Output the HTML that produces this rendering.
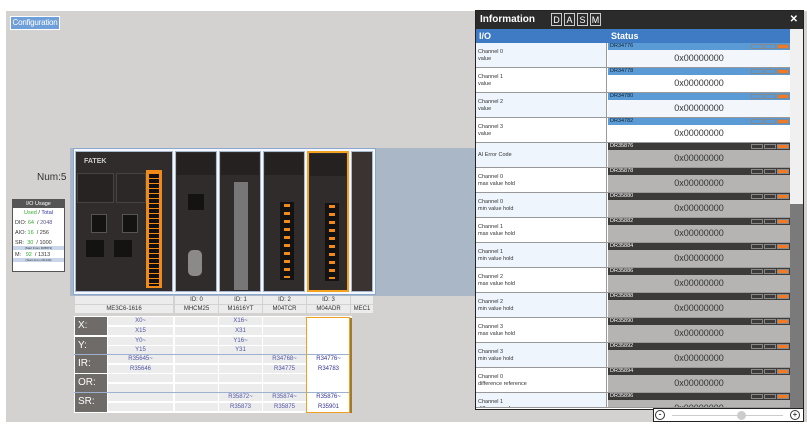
<!DOCTYPE html>
<html><head><meta charset="utf-8"><style>
*{box-sizing:border-box;margin:0;padding:0}
body{width:807px;height:437px;background:#fff;position:relative;overflow:hidden;font-family:"Liberation Sans",sans-serif}
.abs{position:absolute}
.gray{left:6px;top:11px;width:801px;height:411px;background:#d3d2d0}
.cfg{left:10px;top:16px;width:50px;height:14px;background:#6f9fd8;border:1px solid #fff;color:#fff;font-size:8px;line-height:12px;text-align:center;letter-spacing:-0.2px}
.band{left:70px;top:148px;width:410px;height:148px;background:#a9b7c7}
.frame{left:73px;top:148px;width:303px;height:147px;background:#f4f7fb;border:1px solid #8aa7d0}
.mod{position:absolute;top:2px;height:141px;background:#2f2c2b;border:1px solid #a7b8d0}
.mhead{position:absolute;left:1px;right:1px;top:1px;height:22px;background:#242120}
.term{position:absolute;background:#151312}
.tbl div{position:absolute;background:#ececec;font-size:6px;color:#5257a5;text-align:center;line-height:9px}
.lbl{background:#6e6b69!important;color:#fff!important;font-size:10px!important;text-align:left!important;padding-left:3px}
.panel{left:475px;top:10px;width:329px;height:400px;background:#fff;border:1px solid #222}
.ph{left:0;top:0;width:327px;height:18px;background:#2b2b2b;color:#fff;font-weight:bold;font-size:10px;line-height:18px;padding-left:4px}
.dasm{position:absolute;top:2px;width:11px;height:13px;border:1px solid #ccc;font-weight:normal;font-size:9px;line-height:12px;text-align:center}
.ch{left:0;top:18px;width:314px;height:14px;background:#3e7bc4;color:#fff;font-weight:bold;font-size:9px;line-height:14px}
.row{position:absolute;left:0;width:314px;height:25px;border-bottom:1px solid #999}
.rl{position:absolute;left:0;top:0;width:131px;height:24px;font-size:5.5px;color:#333;padding:6px 0 0 2px;line-height:7px;border-right:1px solid #999}
.bar{position:absolute;left:132px;top:0;width:182px;height:7px;font-size:5.5px;line-height:7px;padding-left:2px;color:#fff}
.val{position:absolute;left:132px;top:7px;width:182px;height:17px;font-size:9px;line-height:17px;text-align:center;color:#333}
.b{position:absolute;top:1px;height:5px;width:12px;border:1px solid #888;font-size:3px;line-height:3px}
</style></head><body>
<div class="abs gray"></div>
<div class="abs cfg">Configuration</div>
<div class="abs band"></div>
<div class="abs" style="left:37px;top:172px;font-size:10px;color:#333">Num:5</div>
<div class="abs" style="left:12px;top:199px;width:53px;height:73px;background:#fff;border:1px solid #555;font-size:5.5px;color:#333">
 <div style="background:#555;color:#fff;text-align:center;height:8px;line-height:8px">I/O Usage</div>
 <div style="text-align:center;margin-top:2px"><span style="color:#3a3">Used</span> / <span style="color:#33a">Total</span></div>
 <div style="margin:4px 0 0 2px">DIO: <span style="color:#3a3">64</span> &nbsp;/ <span style="color:#558">2048</span></div>
 <div style="margin:4px 0 0 2px">AIO: <span style="color:#3a3">16</span> &nbsp;/ 256</div>
 <div style="margin:4px 0 0 2px">SR: &nbsp;<span style="color:#3a3">30</span> &nbsp;/ 1000</div>
 <div style="background:#c9d6ea;font-size:3px;text-align:center;height:4px">(Start From R35872)</div>
 <div style="margin:2px 0 0 2px">M: &nbsp;&nbsp;<span style="color:#3a3">92</span> &nbsp;/ 1313</div>
 <div style="background:#c9d6ea;font-size:3px;text-align:center;height:4px">(Start From M1139)</div>
</div>
<div class="abs frame">
 <div class="mod" style="left:1px;width:98px">
  <div style="position:absolute;left:8px;top:6px;color:#ccc;font-weight:bold;font-size:7px">FATEK</div>
  <div style="position:absolute;left:1px;top:21px;width:37px;height:30px;background:#262322;border:1px solid #444"></div>
  <div style="position:absolute;left:40px;top:21px;width:30px;height:30px;background:#2b2827;border:1px solid #444"></div>
  <div class="term" style="left:15px;top:62px;width:16px;height:19px;border:1px solid #555"></div>
  <div class="term" style="left:46px;top:62px;width:16px;height:19px;border:1px solid #555"></div>
  <div class="term" style="left:10px;top:88px;width:18px;height:17px"></div>
  <div class="term" style="left:38px;top:88px;width:18px;height:17px"></div>
  <div style="position:absolute;left:70px;top:18px;width:16px;height:118px;background:#f08a1a"></div>
  <div style="position:absolute;left:73px;top:22px;width:10px;height:112px;background:repeating-linear-gradient(#111 0 4px,#f08a1a 4px 5px)"></div>
 </div>
 <div class="mod" style="left:101px;width:42px"><div class="mhead"></div>
  <div class="term" style="left:12px;top:42px;width:16px;height:16px"></div>
  <div style="position:absolute;left:12px;top:98px;width:14px;height:26px;background:#8c8a88;border-radius:5px"></div>
 </div>
 <div class="mod" style="left:145px;width:42px"><div class="mhead"></div>
  <div style="position:absolute;left:14px;top:30px;width:14px;height:108px;background:#777"></div>
 </div>
 <div class="mod" style="left:189px;width:42px"><div class="mhead"></div>
  <div class="term" style="left:16px;top:50px;width:14px;height:78px"></div>
  <div style="position:absolute;left:20px;top:52px;width:6px;height:74px;background:repeating-linear-gradient(#f08a1a 0 3px,#111 3px 8px)"></div>
 </div>
 <div class="mod" style="left:233px;width:42px;border:2px solid #f2a21e"><div class="mhead"></div>
  <div class="term" style="left:16px;top:50px;width:14px;height:78px"></div>
  <div style="position:absolute;left:20px;top:52px;width:6px;height:74px;background:repeating-linear-gradient(#f08a1a 0 3px,#111 3px 8px)"></div>
 </div>
 <div class="mod" style="left:277px;width:22px;background:#3a3331"></div>
</div>
<div class="tbl">
 <div style="left:75px;top:296px;width:98px;height:8px"></div>
 <div style="left:175px;top:296px;width:43px;height:8px;color:#333">ID: 0</div>
 <div style="left:219px;top:296px;width:43px;height:8px;color:#333">ID: 1</div>
 <div style="left:263px;top:296px;width:43px;height:8px;color:#333">ID: 2</div>
 <div style="left:307px;top:296px;width:43px;height:8px;color:#333">ID: 3</div>
 <div style="left:351px;top:296px;width:22px;height:8px"></div>
 <div style="left:75px;top:305px;width:98px;height:8px;color:#333;line-height:8px">ME3C6-1616</div>
 <div style="left:175px;top:305px;width:43px;height:8px;color:#333;line-height:8px">MHCM25</div>
 <div style="left:219px;top:305px;width:43px;height:8px;color:#333;line-height:8px">M1616YT</div>
 <div style="left:263px;top:305px;width:43px;height:8px;color:#333;line-height:8px">M04TCR</div>
 <div style="left:307px;top:305px;width:43px;height:8px;color:#333;line-height:8px">M04ADR</div>
 <div style="left:351px;top:305px;width:22px;height:8px;color:#333;line-height:8px">MEC1</div>
</div>
<div class="abs" style="left:74px;top:316px;width:278px;height:97px;background:#fff"></div>
<div class="tbl" id="g"></div>
<div class="abs" style="left:74px;top:354px;width:277px;height:1px;background:#9db1d1"></div>
<div class="abs" style="left:74px;top:392px;width:277px;height:1px;background:#9db1d1"></div>
<div class="abs" style="left:306px;top:317px;width:44px;height:96px;border:1px solid #f0a020"></div>
<div class="abs" style="left:350px;top:318px;width:2px;height:95px;background:#a07a30"></div>
<script>
var rows=[317,327,337,346,355,365,374,384,393,403],cols=[[108,65],[175,43],[219,43],[263,43],[307,43]];
var t=[["X0~","","X16~","",""],["X15","","X31","",""],["Y0~","","Y16~","",""],["Y15","","Y31","",""],["R35645~","","","R34768~","R34776~"],["R35646","","","R34775","R34783"],["","","","",""],["","","","",""],["","","R35872~","R35874~","R35876~"],["","","R35873","R35875","R35901"]];
var g=document.getElementById('g'),h='';
["X:","Y:","IR:","OR:","SR:"].forEach(function(l,i){h+='<div class="lbl" style="left:75px;top:'+rows[i*2]+'px;width:32px;height:'+(i==4?19:18)+'px;line-height:18px">'+l+'</div>'});
rows.forEach(function(y,r){cols.forEach(function(c,k){h+='<div style="left:'+c[0]+'px;top:'+y+'px;width:'+c[1]+'px;height:8px;line-height:8px;'+(k==4?'background:#fff;color:#339;':'')+'">'+t[r][k]+'</div>'})});
g.innerHTML=h;
</script>
<div class="abs panel">
 <div class="abs ph">Information
  <span class="dasm" style="left:75px">D</span><span class="dasm" style="left:88px">A</span><span class="dasm" style="left:101px">S</span><span class="dasm" style="left:114px">M</span>
  <span style="position:absolute;right:5px;top:0">✕</span></div>
 <div class="abs ch"><span style="padding-left:3px">I/O</span><span style="position:absolute;left:135px">Status</span></div>
 <div class="abs" style="left:314px;top:18px;width:13px;height:380px;background:#7a7a7a"><div style="background:#f0f0f0;height:175px"></div></div>
 <div id="rs"></div>
</div>
<script>
var L=[["Channel 0","value"],["Channel 1","value"],["Channel 2","value"],["Channel 3","value"],["AI Error Code",""],["Channel 0","max value hold"],["Channel 0","min value hold"],["Channel 1","max value hold"],["Channel 1","min value hold"],["Channel 2","max value hold"],["Channel 2","min value hold"],["Channel 3","max value hold"],["Channel 3","min value hold"],["Channel 0","difference reference"],["Channel 1","difference reference"]];
var ids=["DR34776","DR34778","DR34780","DR34782","DR35876","DR35878","DR35880","DR35882","DR35884","DR35886","DR35888","DR35890","DR35892","DR35894","DR35896"];
var s='';
L.forEach(function(l,i){var y=32+i*25;if(y>395)return;var blue=i<4;
s+='<div class="row" style="top:'+y+'px;height:'+Math.min(25,397-y)+'px;overflow:hidden"><div class="rl" style="background:'+(i%2?'#fff':'#eef5fc')+';'+(l[1]?'':'padding-top:9px')+'">'+l[0]+'<br>'+l[1]+'</div><div class="bar" style="background:'+(blue?'#5b9bd5;color:#123':'#3d3b3a')+'">'+ids[i]+'<span class="b" style="right:27px;background:'+(blue?'#5b9bd5':'#3d3b3a')+'"></span><span class="b" style="right:14px;background:'+(blue?'#5b9bd5':'#3d3b3a')+'"></span><span class="b" style="right:1px;background:#f07a28"></span></div><div class="val" style="background:'+(blue?(i%2?'#fff':'#f3f7fc'):'#b5b4b3')+'">0x00000000</div></div>'});
document.getElementById('rs').innerHTML=s;
</script>
<div class="abs" style="left:653px;top:408px;width:151px;height:14px;background:#fff;border:1px solid #222">
 <div style="position:absolute;left:1px;top:1px;width:10px;height:10px;border:1.5px solid #333;border-radius:50%;font-size:9px;line-height:6px;text-align:center">-</div>
 <div style="position:absolute;left:18px;top:6px;width:111px;height:1px;background:#ccc"></div>
 <div style="position:absolute;left:83px;top:2px;width:9px;height:9px;background:#ccc;border-radius:50%"></div>
 <div style="position:absolute;left:136px;top:1px;width:10px;height:10px;border:1.5px solid #333;border-radius:50%;font-size:8px;line-height:7px;text-align:center">+</div>
</div>
</body></html>
